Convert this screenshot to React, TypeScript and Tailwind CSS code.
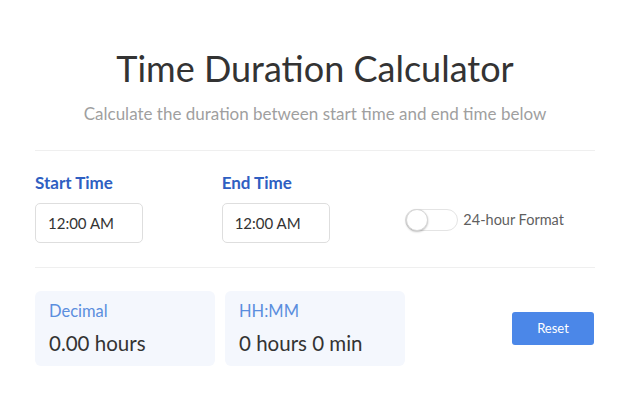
import React, { useState } from 'react';

export default function App() {
    const [is24, setIs24] = useState(false);

    return (
        <div className="min-h-screen bg-white font-['Lato','Noto_Sans',sans-serif] text-[#333]">
            <div className="px-[35px] pt-[46px]">
                <h1 className="text-center text-[36px] leading-[44px] font-normal text-[#333]">Time Duration Calculator</h1>
                <p className="mt-[12px] text-center text-[17px] leading-[24px] text-[#9f9f9f]">
                    Calculate the duration between start time and end time below
                </p>

                <div className="mt-[24px] h-px bg-[#efefef]" />

                <div className="grid grid-cols-3 pt-[21px]">
                    <div>
                        <label className="block text-[17px] leading-[22px] font-bold text-[#2f5fc2]">Start Time</label>
                        <div className="mt-[9px] flex h-[40px] w-[108px] items-center rounded-[5px] border border-[#dedede] pl-[12px] text-[15px] text-[#333]">
                            12:00 AM
                        </div>
                    </div>
                    <div>
                        <label className="block text-[17px] leading-[22px] font-bold text-[#2f5fc2]">End Time</label>
                        <div className="mt-[9px] flex h-[40px] w-[108px] items-center rounded-[5px] border border-[#dedede] pl-[12px] text-[15px] text-[#333]">
                            12:00 AM
                        </div>
                    </div>
                    <div className="-ml-[3px] flex items-end pb-[12px]">
                        <div className="flex items-center gap-[5px]">
                            <button
                                onClick={() => setIs24(!is24)}
                                className="relative h-[22px] w-[53px] rounded-full border border-[#e4e4e4] bg-white"
                            >
                                <span className="absolute left-0 top-[-1px] h-[22px] w-[22px] rounded-full border border-[#d6d6d6] bg-white shadow-[0_1px_2px_rgba(0,0,0,0.25)]" />
                            </button>
                            <span className="text-[14.5px] text-[#5f5f5f]">24-hour Format</span>
                        </div>
                    </div>
                </div>

                <div className="mt-[24px] h-px bg-[#efefef]" />

                <div className="mt-[23px] grid grid-cols-3 gap-[10px]">
                    <div className="rounded-[6px] bg-[#f4f7fd] px-[14px] pt-[10px] pb-[9px]">
                        <div className="text-[16.5px] leading-[20px] text-[#5b8ede]">Decimal</div>
                        <div className="mt-[8px] text-[20.5px] leading-[28px] text-[#333]">0.00 hours</div>
                    </div>
                    <div className="rounded-[6px] bg-[#f4f7fd] px-[14px] pt-[10px] pb-[9px]">
                        <div className="text-[16.5px] leading-[20px] text-[#5b8ede]">HH:MM</div>
                        <div className="mt-[8px] text-[20.5px] leading-[28px] text-[#333]">0 hours 0 min</div>
                    </div>
                    <div className="flex items-center justify-end pr-px">
                        <button className="h-[33px] w-[82px] rounded-[3px] bg-[#4b87e8] text-[13px] text-white">Reset</button>
                    </div>
                </div>
            </div>
        </div>
    );
}
